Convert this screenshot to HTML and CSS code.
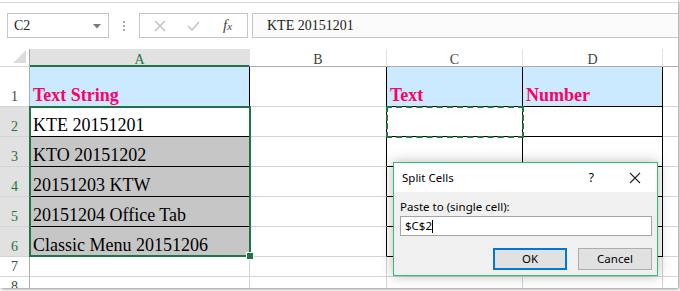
FILE: index.html
```html
<!DOCTYPE html>
<html>
  <head>
    <title>Split Cells</title>
    <link rel="stylesheet" href="styles.css">
  </head>
  <body>
    <div class="frame">
      <div class="toolbar">
        <div class="namebox">
          <span>C2</span>
          <svg class="arrow" width="8" height="5" viewBox="0 0 8 5"><path d="M0 0 H8 L4 4.5 Z" fill="#7a7a7a"/></svg>
        </div>
        <div class="dots"><i></i><i></i><i></i></div>
        <div class="fnbox">
          <svg width="12" height="12" viewBox="0 0 12 12"><path d="M1 1 L11 11 M11 1 L1 11" stroke="#bcbcbc" stroke-width="1.3" fill="none"/></svg>
          <svg width="13" height="10" viewBox="0 0 13 10"><path d="M1 5 L5 9 L12 1" stroke="#c4c4c4" stroke-width="1.6" fill="none"/></svg>
          <span class="fx">f<small>x</small></span>
        </div>
        <div class="formula">KTE 20151201</div>
      </div>

      <div class="sheet">
        <div class="grid">
          <!-- header -->
          <div class="corner"><svg width="13" height="13" viewBox="0 0 13 13"><path d="M13 0 V13 H0 Z" fill="#dcdcdc"/></svg></div>
          <div class="ch sel">A</div>
          <div class="ch">B</div>
          <div class="ch">C</div>
          <div class="ch">D</div>
          <div class="ch last"></div>

          <!-- row 1 -->
          <div class="rh">1</div>
          <div class="c hd br bb">Text String</div>
          <div class="c br"></div>
          <div class="c hd br bb">Text</div>
          <div class="c hd br bb">Number</div>
          <div class="c"></div>

          <!-- row 2 -->
          <div class="rh sel">2</div>
          <div class="c br bb">KTE 20151201</div>
          <div class="c br"></div>
          <div class="c br bb"></div>
          <div class="c br bb"></div>
          <div class="c"></div>

          <!-- row 3 -->
          <div class="rh sel">3</div>
          <div class="c shade br bb">KTO 20151202</div>
          <div class="c br"></div>
          <div class="c br bb"></div>
          <div class="c br bb"></div>
          <div class="c"></div>

          <!-- row 4 -->
          <div class="rh sel">4</div>
          <div class="c shade br bb">20151203 KTW</div>
          <div class="c br"></div>
          <div class="c br bb"></div>
          <div class="c br bb"></div>
          <div class="c"></div>

          <!-- row 5 -->
          <div class="rh sel">5</div>
          <div class="c shade br bb">20151204 Office Tab</div>
          <div class="c br"></div>
          <div class="c br bb"></div>
          <div class="c br bb"></div>
          <div class="c"></div>

          <!-- row 6 -->
          <div class="rh sel">6</div>
          <div class="c shade br bb">Classic Menu 20151206</div>
          <div class="c br"></div>
          <div class="c br bb"></div>
          <div class="c br bb"></div>
          <div class="c"></div>

          <!-- row 7 -->
          <div class="rh">7</div>
          <div class="c"></div>
          <div class="c"></div>
          <div class="c"></div>
          <div class="c"></div>
          <div class="c"></div>

          <!-- row 8 -->
          <div class="rh">8</div>
          <div class="c"></div>
          <div class="c"></div>
          <div class="c"></div>
          <div class="c"></div>
          <div class="c"></div>
        </div>

        <div class="selection"><span class="handle"></span></div>
        <div class="marquee"></div>

        <div class="dlg">
          <div class="dlg-title">
            <span class="dlg-name">Split Cells</span>
            <span class="dlg-help">?</span>
            <svg width="12" height="12" viewBox="0 0 12 12"><path d="M1 1 L11 11 M11 1 L1 11" stroke="#222" stroke-width="1.1" fill="none"/></svg>
          </div>
          <div class="dlg-body">
            <div class="dlg-label">Paste to (single cell):</div>
            <div class="dlg-input">$C$2<span class="caret"></span></div>
            <div class="dlg-btns">
              <div class="btn ok">OK</div>
              <div class="btn">Cancel</div>
            </div>
          </div>
        </div>
      </div>
    </div>
  </body>
</html>
```

FILE: styles.css
```css
body {
  margin: 0;
  background: #ffffff;
  width: 680px;
  height: 291px;
  overflow: hidden;
  font-family: "Liberation Serif", "Times New Roman", serif;
}
.frame {
  width: 678px;
  height: 288px;
  padding-top: 2px;
  box-sizing: border-box;
  background: #ffffff;
  overflow: hidden;
  box-shadow: 1px 1px 3px rgba(0, 0, 0, 0.45);
}

/* formula bar */
.toolbar {
  border-top: 1px solid #d6d6d6;
  padding: 10px 0 0 7px;
  display: flex;
  height: 25px;
}
.namebox {
  width: 102px;
  height: 25px;
  box-sizing: border-box;
  border: 1px solid #c6c6c6;
  display: flex;
  align-items: center;
  justify-content: space-between;
  padding: 0 7px 0 6px;
  font-size: 14px;
  color: #222;
}
.arrow {
  margin-top: 1px;
}
.dots {
  width: 30px;
  display: flex;
  flex-direction: column;
  align-items: center;
  justify-content: center;
  gap: 2px;
}
.dots i {
  display: block;
  width: 2px;
  height: 2px;
  background: #a8a8a8;
}
.fnbox {
  width: 109px;
  height: 25px;
  box-sizing: border-box;
  border: 1px solid #c6c6c6;
  display: flex;
  align-items: center;
  padding: 0 0 0 14px;
  gap: 21px;
}
.fx {
  font-style: italic;
  font-size: 15px;
  color: #444;
  margin-left: 2px;
}
.fx small {
  font-size: 11px;
}
.formula {
  flex: 1;
  margin-left: 4px;
  height: 25px;
  box-sizing: border-box;
  border: 1px solid #c6c6c6;
  border-right: none;
  background: #fbfbfb;
  padding-left: 14px;
  font-size: 14px;
  line-height: 23px;
  color: #222;
}

/* sheet */
.sheet {
  position: relative;
  margin-top: 11px;
}
.grid {
  display: grid;
  grid-template-columns: 30px 220px 137px 136px 140px 20px;
  grid-template-rows: 18px 40px 30px 30px 30px 30px 30px 20px 20px;
}
.grid > div {
  box-sizing: border-box;
}
.corner {
  border-right: 1px solid #ababab;
  border-bottom: 1px solid #d4d4d4;
  display: flex;
  align-items: flex-end;
  justify-content: flex-end;
  padding: 0 3px 3px 0;
}
.ch {
  border-right: 1px solid #e1e1e1;
  border-bottom: 1px solid #ababab;
  text-align: center;
  font-size: 14px;
  line-height: 21px;
  color: #444;
}
.ch.sel {
  background: #e1e1e1;
  color: #217346;
  border-bottom: 2px solid #217346;
}
.ch.last {
  border-right: none;
}
.rh {
  border-right: 1px solid #ababab;
  border-bottom: 1px solid #d4d4d4;
  text-align: center;
  font-size: 14px;
  color: #444;
  display: flex;
  align-items: flex-end;
  justify-content: center;
  padding-bottom: 1px;
}
.rh.sel {
  background: #e1e1e1;
  color: #217346;
}
.c {
  border-right: 1px solid #d4d4d4;
  border-bottom: 1px solid #d4d4d4;
  font-size: 18px;
  color: #000;
  display: flex;
  align-items: flex-end;
  padding: 0 0 0 3px;
  white-space: nowrap;
}
.c.br {
  border-right-color: #000;
}
.c.bb {
  border-bottom-color: #000;
}
.c.hd {
  background: #cceaff;
  color: #ff0066;
  font-weight: bold;
}
.c.shade {
  background: #c6c6c6;
}

/* overlays */
.selection {
  position: absolute;
  left: 29px;
  top: 57px;
  width: 222px;
  height: 151px;
  border: 2px solid #217346;
  box-sizing: border-box;
}
.handle {
  position: absolute;
  right: -5px;
  bottom: -5px;
  width: 6px;
  height: 6px;
  background: #217346;
  border: 1px solid #fff;
}
.marquee {
  position: absolute;
  left: 386px;
  top: 57px;
  width: 138px;
  height: 32px;
  border: 2px dashed #217346;
  box-sizing: border-box;
}

/* dialog */
.dlg {
  position: absolute;
  left: 393px;
  top: 113px;
  width: 265px;
  height: 114px;
  box-sizing: border-box;
  border: 1px solid #2fc07a;
  background: #f0f0f0;
  box-shadow: 0 0 12px rgba(0, 0, 0, 0.28);
  font-family: "Noto Sans", "Open Sans", sans-serif;
  font-size: 11.5px;
  color: #000;
}
.dlg-title {
  height: 29px;
  background: #fff;
  display: flex;
  align-items: center;
  padding: 0 16px 0 8px;
}
.dlg-name {
  flex: 1;
}
.dlg-help {
  margin-right: 35px;
  font-size: 12px;
}
.dlg-body {
  padding: 7px 5px 0 6px;
}
.dlg-label {
  line-height: 16px;
}
.dlg-input {
  margin-top: 1px;
  height: 20px;
  box-sizing: border-box;
  border: 1px solid #a5a5a5;
  background: #fff;
  padding-left: 4px;
  line-height: 18px;
  display: flex;
  align-items: center;
}
.caret {
  display: inline-block;
  width: 1px;
  height: 13px;
  background: #000;
}
.dlg-btns {
  display: flex;
  justify-content: flex-end;
  gap: 11px;
  margin-top: 12px;
}
.btn {
  width: 74px;
  height: 22px;
  box-sizing: border-box;
  border: 1px solid #adadad;
  background: #e1e1e1;
  text-align: center;
  line-height: 20px;
}
.btn.ok {
  border: 2px solid #0078d7;
  line-height: 18px;
}
```
